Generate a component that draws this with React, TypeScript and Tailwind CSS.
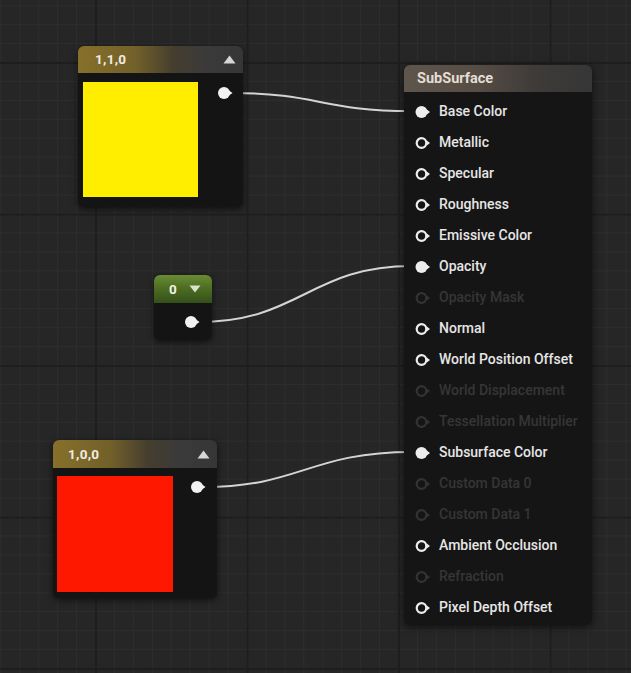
import React from "react";

type PinKind = "filled" | "hollow" | "disabled";

function Pin({ kind }: { kind: PinKind }) {
  const c = kind === "disabled" ? "#333333" : "#ededed";
  return (
    <svg width="17" height="14" viewBox="0 0 17 14" className="shrink-0">
      {kind === "filled" ? (
        <circle cx="6.5" cy="7" r="6" fill={c} />
      ) : (
        <circle cx="6.5" cy="7" r="4.8" fill="none" stroke={c} strokeWidth="2.2" />
      )}
      <polygon points="11.8,4.4 15,7 11.8,9.6" fill={c} />
    </svg>
  );
}

function OutPin() {
  return (
    <svg width="16" height="14" viewBox="0 0 16 14" className="shrink-0">
      <circle cx="6" cy="7" r="6" fill="#f2f2f2" />
      <polygon points="11,4.5 14.5,7 11,9.5" fill="#f2f2f2" />
    </svg>
  );
}

function TriUp() {
  return (
    <svg width="13" height="9" viewBox="0 0 13 9">
      <polygon points="6.5,0.5 12.5,8.5 0.5,8.5" fill="#d6d6d6" />
    </svg>
  );
}

function TriDown() {
  return (
    <svg width="12" height="8" viewBox="0 0 12 8">
      <polygon points="0.5,0.5 11.5,0.5 6,7.5" fill="#d8e4cc" />
    </svg>
  );
}

const rows: { label: string; kind: PinKind }[] = [
  { label: "Base Color", kind: "filled" },
  { label: "Metallic", kind: "hollow" },
  { label: "Specular", kind: "hollow" },
  { label: "Roughness", kind: "hollow" },
  { label: "Emissive Color", kind: "hollow" },
  { label: "Opacity", kind: "filled" },
  { label: "Opacity Mask", kind: "disabled" },
  { label: "Normal", kind: "hollow" },
  { label: "World Position Offset", kind: "hollow" },
  { label: "World Displacement", kind: "disabled" },
  { label: "Tessellation Multiplier", kind: "disabled" },
  { label: "Subsurface Color", kind: "filled" },
  { label: "Custom Data 0", kind: "disabled" },
  { label: "Custom Data 1", kind: "disabled" },
  { label: "Ambient Occlusion", kind: "hollow" },
  { label: "Refraction", kind: "disabled" },
  { label: "Pixel Depth Offset", kind: "hollow" },
];

export default function App() {
  return (
    <div
      className="relative w-[631px] h-[673px] overflow-hidden bg-[#262626] bg-[linear-gradient(to_right,#1e1e1e_2px,transparent_2px),linear-gradient(to_bottom,#1e1e1e_2px,transparent_2px),linear-gradient(to_right,#2d2d2d_1px,transparent_1px),linear-gradient(to_bottom,#2d2d2d_1px,transparent_1px)] bg-[size:151.5px_151.5px,151.5px_151.5px,18.94px_18.94px,18.94px_18.94px] bg-[position:95px_62px,95px_62px,95px_62px,95px_62px]"
      style={{ fontFamily: "Roboto, 'Noto Sans', sans-serif" }}
    >
      {/* wires */}
      <svg className="absolute left-0 top-0" width="631" height="673" viewBox="0 0 631 673">
        <g fill="none" stroke="#d4d4d4" strokeWidth="2" strokeLinecap="round">
          <path d="M230 93 C 320 93, 320 111, 412 111" />
          <path d="M198 322 C 300 322, 310 266, 412 266" />
          <path d="M204 487 C 300 487, 310 452, 412 452" />
        </g>
      </svg>

      {/* Yellow constant node */}
      <div className="absolute left-[78px] top-[46px] w-[165px] h-[161px] rounded-[6px] bg-[#141414] shadow-[0_2px_6px_rgba(0,0,0,0.6)] flex flex-col overflow-hidden">
        <div className="h-[27px] flex items-center justify-between pl-[17px] pr-[7px] bg-[linear-gradient(to_right,#86702a_0%,#72602a_35%,#453e2e_58%,#3a3a3a_78%,#363636_100%)]">
          <span className="text-[13.5px] font-bold text-[#f0ece0] tracking-[0.3px]">1,1,0</span>
          <TriUp />
        </div>
        <div className="flex flex-row pl-[5px] pt-[9px]">
          <div className="w-[115px] h-[115px] bg-[#ffee00]" />
          <div className="ml-[20px] mt-[4px]">
            <OutPin />
          </div>
        </div>
      </div>

      {/* Scalar node */}
      <div className="absolute left-[154px] top-[275px] w-[58px] h-[65px] rounded-[6px] bg-[#141414] shadow-[0_2px_6px_rgba(0,0,0,0.6)] flex flex-col overflow-hidden">
        <div className="h-[28px] flex items-center pl-[15px] pr-[8px] gap-[12px] bg-[linear-gradient(to_bottom,#6a8c34_0%,#4e6e22_45%,#34501a_100%)]">
          <span className="text-[13.5px] font-bold text-[#eef4e4]">0</span>
          <TriDown />
        </div>
        <div className="pl-[31px] pt-[12px]">
          <OutPin />
        </div>
      </div>

      {/* Red constant node */}
      <div className="absolute left-[53px] top-[440px] w-[164px] h-[158px] rounded-[6px] bg-[#141414] shadow-[0_2px_6px_rgba(0,0,0,0.6)] flex flex-col overflow-hidden">
        <div className="h-[28px] flex items-center justify-between pl-[15px] pr-[7px] bg-[linear-gradient(to_right,#86702a_0%,#72602a_35%,#453e2e_58%,#3a3a3a_78%,#363636_100%)]">
          <span className="text-[13.5px] font-bold text-[#f0ece0] tracking-[0.3px]">1,0,0</span>
          <TriUp />
        </div>
        <div className="flex flex-row pl-[4px] pt-[8px]">
          <div className="w-[116px] h-[116px] bg-[#ff1800]" />
          <div className="ml-[18px] mt-[4px]">
            <OutPin />
          </div>
        </div>
      </div>

      {/* Material result node */}
      <div className="absolute left-[404px] top-[65px] w-[188px] h-[560px] rounded-[6px] bg-[#151515] shadow-[0_2px_8px_rgba(0,0,0,0.6)] flex flex-col overflow-hidden">
        <div className="h-[27px] shrink-0 flex items-center pl-[13px] bg-[linear-gradient(to_right,#5e554c_0%,#554c44_40%,#3e3b38_70%,#363636_100%)]">
          <span className="text-[14.5px] font-bold text-[#e4ddd4]">SubSurface</span>
        </div>
        <div className="flex flex-col pt-[4px]">
          {rows.map((r) => (
            <div key={r.label} className="h-[31px] flex items-center pl-[11px] gap-[7px]">
              <Pin kind={r.kind} />
              <span
                className={
                  r.kind === "disabled"
                    ? "text-[14px] font-medium text-[#363636] whitespace-nowrap"
                    : "text-[14px] font-medium text-[#e6e6e6] whitespace-nowrap"
                }
              >
                {r.label}
              </span>
            </div>
          ))}
        </div>
      </div>
    </div>
  );
}
